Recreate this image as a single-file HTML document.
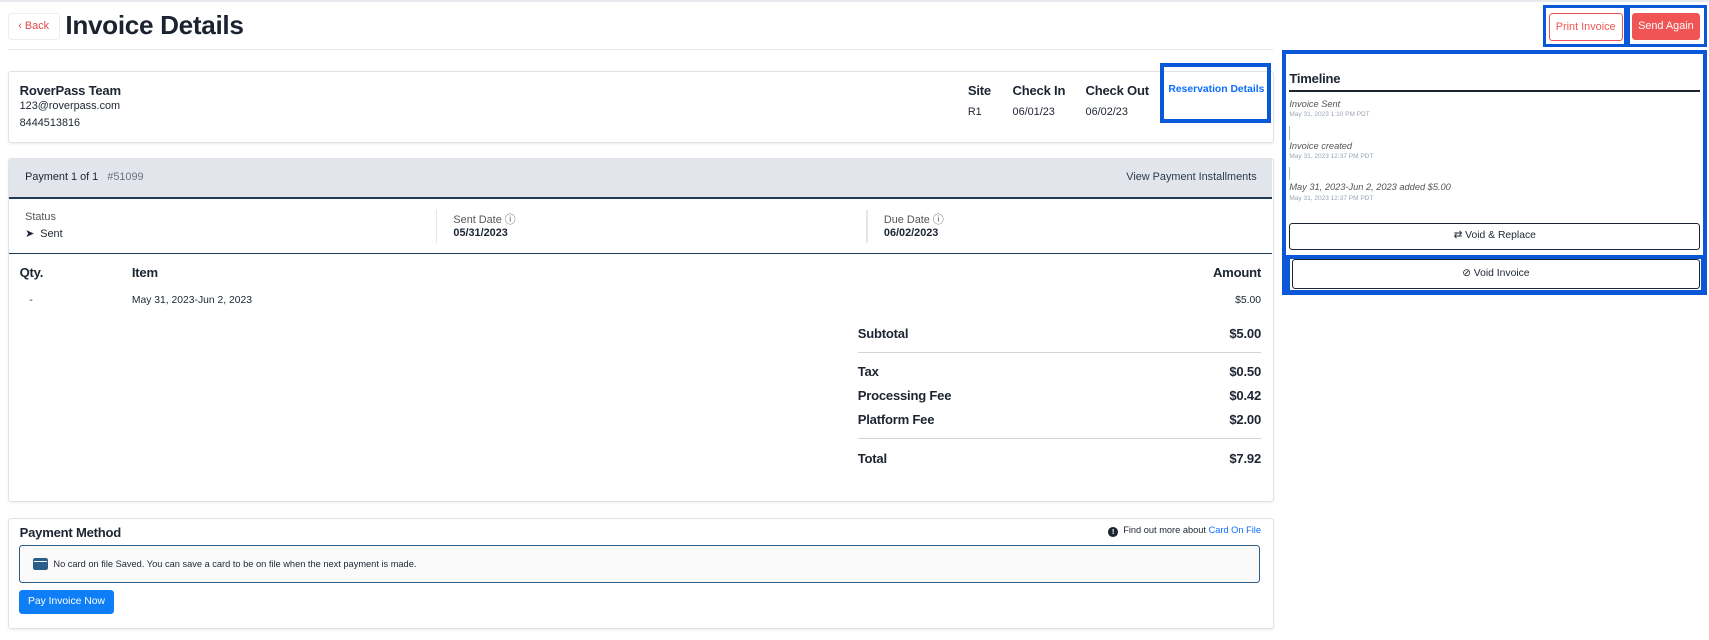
<!DOCTYPE html>
<html><head><meta charset="utf-8"><style>
html,body{margin:0;padding:0;background:#fff;}
body{width:1568px;height:587px;zoom:1.0899;overflow:hidden;position:relative;font-family:"Liberation Sans",Arial,sans-serif;color:#1d2532;}
.a{position:absolute;}
.card{position:absolute;background:#fff;border:1px solid #dfe3e8;border-radius:3px;box-shadow:0 1px 2px rgba(0,0,0,.06);}
.bb{position:absolute;border:4px solid #0a57d8;box-sizing:border-box;}
.s{font-size:10px;}
.b{font-weight:bold;}
.lbl{font-size:12px;font-weight:bold;color:#1d2532;letter-spacing:-0.2px;}
.r{text-align:right;}
</style></head><body>
<div class="a" style="left:0;top:0;width:1568px;height:2px;background:#e6eaef"></div>
<div class="a" style="left:7px;top:12px;width:46px;height:23px;border:1px solid #eceef1;border-radius:3px;color:#e84b4b;font-size:10px;line-height:23px;text-align:center">&#8249; Back</div>
<div class="a b" style="left:60px;top:9px;font-size:24px;color:#1b2330;letter-spacing:-0.3px">Invoice Details</div>
<div class="a" style="left:7px;top:45px;width:1161px;height:1px;background:#e3e6ea"></div>

<div class="bb" style="left:1416px;top:5px;width:77px;height:38px;border-width:3px"></div>
<div class="a" style="left:1421px;top:12px;width:66px;height:24px;border:1px solid #f05454;border-radius:3px;color:#f05454;font-size:10px;line-height:24px;text-align:center">Print Invoice</div>
<div class="bb" style="left:1493px;top:5px;width:73px;height:38px;border-width:3px"></div>
<div class="a" style="left:1497px;top:12px;width:63px;height:25px;background:#f05454;border-radius:3px;color:#fff;font-size:10px;line-height:25px;text-align:center">Send Again</div>

<div class="card" style="left:7px;top:65px;width:1160px;height:64px"></div>
<div class="a lbl" style="left:18px;top:76px">RoverPass Team</div>
<div class="a s" style="left:18px;top:92px">123@roverpass.com</div>
<div class="a s" style="left:18px;top:107px">8444513816</div>
<div class="a lbl" style="left:888px;top:76px">Site</div>
<div class="a lbl" style="left:929px;top:76px">Check In</div>
<div class="a lbl" style="left:996px;top:76px">Check Out</div>
<div class="a s" style="left:888px;top:97px">R1</div>
<div class="a s" style="left:929px;top:97px">06/01/23</div>
<div class="a s" style="left:996px;top:97px">06/02/23</div>
<div class="bb" style="left:1064px;top:58px;width:102px;height:55px"></div>
<div class="a b" style="left:1072px;top:77px;font-size:9.5px;color:#0d6efd">Reservation Details</div>

<div class="card" style="left:7px;top:145px;width:1160px;height:314px"></div>
<div class="a" style="left:8px;top:146px;width:1159px;height:35px;background:#e2e6ec"></div>
<div class="a" style="left:8px;top:181px;width:1159px;height:2px;background:#1f3a52"></div>
<div class="a s" style="left:23px;top:157px">Payment 1 of 1 &nbsp;&nbsp;<span style="color:#6b7280">#51099</span></div>
<div class="a s" style="left:1000px;width:153px;top:157px;text-align:right;color:#2b3a4d">View Payment Installments</div>
<div class="a s" style="left:23px;top:194px;color:#555">Status</div>
<div class="a s" style="left:23px;top:208px">&#10148;&nbsp; Sent</div>
<div class="a" style="left:400px;top:193px;width:1px;height:30px;background:#e3e6ea"></div>
<div class="a s" style="left:416px;top:194px;color:#555">Sent Date &#9432;</div>
<div class="a s b" style="left:416px;top:208px">05/31/2023</div>
<div class="a" style="left:795px;top:193px;width:1px;height:30px;background:#e3e6ea"></div>
<div class="a s" style="left:811px;top:194px;color:#555">Due Date &#9432;</div>
<div class="a s b" style="left:811px;top:208px">06/02/2023</div>
<div class="a" style="left:8px;top:232px;width:1159px;height:1px;background:#1f3a52"></div>
<div class="a lbl" style="left:18px;top:243px">Qty.</div>
<div class="a lbl" style="left:121px;top:243px">Item</div>
<div class="a lbl r" style="left:1000px;width:157px;top:243px">Amount</div>
<div class="a" style="left:27px;top:271px;font-size:9.5px">-</div>
<div class="a" style="left:121px;top:271px;font-size:9.5px">May 31, 2023-Jun 2, 2023</div>
<div class="a r" style="left:1000px;width:157px;top:271px;font-size:9.5px">$5.00</div>
<div class="a lbl" style="left:787px;top:299px">Subtotal</div><div class="a lbl r" style="left:1000px;width:157px;top:299px">$5.00</div>
<div class="a" style="left:787px;top:323px;width:370px;height:1px;background:#cfd3d8"></div>
<div class="a lbl" style="left:787px;top:334px">Tax</div><div class="a lbl r" style="left:1000px;width:157px;top:334px">$0.50</div>
<div class="a lbl" style="left:787px;top:356px">Processing Fee</div><div class="a lbl r" style="left:1000px;width:157px;top:356px">$0.42</div>
<div class="a lbl" style="left:787px;top:378px">Platform Fee</div><div class="a lbl r" style="left:1000px;width:157px;top:378px">$2.00</div>
<div class="a" style="left:787px;top:402px;width:370px;height:1px;background:#cfd3d8"></div>
<div class="a lbl" style="left:787px;top:414px">Total</div><div class="a lbl r" style="left:1000px;width:157px;top:414px">$7.92</div>

<div class="card" style="left:7px;top:475px;width:1160px;height:100px"></div>
<div class="a lbl" style="left:18px;top:482px">Payment Method</div>
<div class="a" style="left:1000px;width:157px;top:482px;font-size:8.5px;text-align:right"><span style="display:inline-block;width:9px;height:9px;border-radius:50%;background:#1d2532;color:#fff;font-size:7px;line-height:9px;text-align:center;font-weight:bold;vertical-align:-1px">!</span>&nbsp; Find out more about <span style="color:#0d6efd">Card On File</span></div>
<div class="a" style="left:17px;top:500px;width:1139px;height:35px;border:1px solid #2a5d8a;border-radius:3px;background:#fafafa;box-sizing:border-box"></div>
<div class="a" style="left:30px;top:512px;width:14px;height:11px;background:#2a5d8a;border-radius:2px"></div>
<div class="a" style="left:31px;top:515px;width:12px;height:1px;background:#fff"></div>
<div class="a" style="left:49px;top:513px;font-size:8.5px">No card on file Saved. You can save a card to be on file when the next payment is made.</div>
<div class="a" style="left:17px;top:541px;width:88px;height:22px;background:#0d7ef5;border-radius:3px;color:#fff;font-size:9.5px;line-height:22px;text-align:center">Pay Invoice Now</div>

<div class="bb" style="left:1176px;top:46px;width:390px;height:225px"></div>
<div class="a lbl" style="left:1183px;top:65px">Timeline</div>
<div class="a" style="left:1183px;top:83px;width:377px;height:1px;background:#1d2532"></div>
<div class="a" style="left:1183px;top:91px;font-size:8.5px;font-style:italic;color:#555">Invoice Sent</div>
<div class="a" style="left:1183px;top:102px;font-size:6px;color:#9aa4b5">May 31, 2023 1:10 PM PDT</div>
<div class="a" style="left:1183px;top:116px;width:1px;height:12px;background:#bbb"></div>
<div class="a" style="left:1183px;top:129px;font-size:8.5px;font-style:italic;color:#555">Invoice created</div>
<div class="a" style="left:1183px;top:140px;font-size:6px;color:#9aa4b5">May 31, 2023 12:37 PM PDT</div>
<div class="a" style="left:1183px;top:153px;width:1px;height:12px;background:#bbb"></div>
<div class="a" style="left:1183px;top:167px;font-size:8.5px;font-style:italic;color:#555">May 31, 2023-Jun 2, 2023 added $5.00</div>
<div class="a" style="left:1183px;top:179px;font-size:6px;color:#9aa4b5">May 31, 2023 12:37 PM PDT</div>
<div class="a" style="left:1183px;top:205px;width:377px;height:24px;border:1px solid #1d2532;border-radius:3px;box-sizing:border-box;font-size:9.5px;line-height:22px;text-align:center">&#8644; Void &amp; Replace</div>
<div class="bb" style="left:1180px;top:234px;width:384px;height:36px"></div>
<div class="a" style="left:1185px;top:238px;width:375px;height:27px;border:1px solid #1d2532;border-radius:3px;box-sizing:border-box;font-size:9.5px;line-height:25px;text-align:center">&#8856; Void Invoice</div>
</body></html>
